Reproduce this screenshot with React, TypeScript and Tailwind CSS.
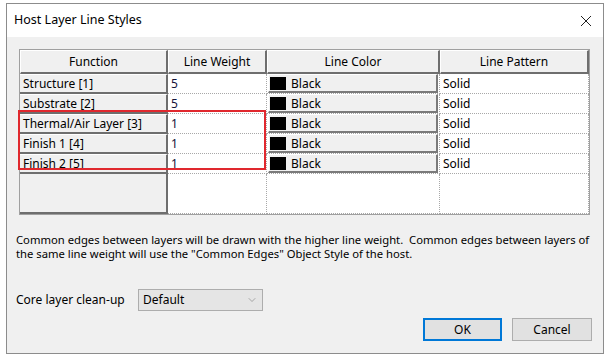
import { ChevronDown } from 'lucide-react';

const rows = [
  { fn: 'Structure [1]', weight: '5' },
  { fn: 'Substrate [2]', weight: '5' },
  { fn: 'Thermal/Air Layer [3]', weight: '1' },
  { fn: 'Finish 1 [4]', weight: '1' },
  { fn: 'Finish 2 [5]', weight: '1' },
];

function HeaderCell({ label, w }: { label: string; w: string }) {
  return (
    <div
      className={`${w} h-full flex items-center justify-center bg-[#f0f0f0] border-t border-l border-t-white border-l-white border-r-2 border-b-2 border-r-[#6e6e6e] border-b-[#6e6e6e]`}
    >
      {label}
    </div>
  );
}

export default function App() {
  return (
    <div
      className="w-[609px] h-[361px] bg-white pl-[6px] pt-[3px] text-[12px] text-black"
      style={{ fontFamily: '"Noto Sans", "Open Sans", sans-serif' }}
    >
      <div className="w-[598px] h-[351px] border border-[#8c8c8c] flex flex-col bg-[#f0f0f0]">
        {/* title bar */}
        <div className="h-[33px] bg-white flex items-center justify-between pl-[7px] pr-[11px] shrink-0">
          <span className="text-[12.5px]">Host Layer Line Styles</span>
          <svg width="12" height="12" viewBox="0 0 12 12">
            <path d="M1 1L11 11M11 1L1 11" stroke="#222" strokeWidth="1" />
          </svg>
        </div>

        <div className="flex-1 flex flex-col pl-[12px] pt-[12px]">
          {/* table */}
          <div className="relative w-[571px] h-[166px] border border-[#a0a0a0] bg-white flex flex-col">
            <div className="h-[24px] flex shrink-0">
              <HeaderCell label="Function" w="w-[148px]" />
              <HeaderCell label="Line Weight" w="w-[99px]" />
              <HeaderCell label="Line Color" w="w-[173px]" />
              <HeaderCell label="Line Pattern" w="w-[149px]" />
            </div>
            {rows.map((r, i) => (
              <div key={i} className="h-[20px] flex shrink-0">
                <div className="w-[148px] h-full flex items-center pl-[3px] bg-[#f0f0f0] border-t border-t-white border-r-2 border-b-2 border-r-[#6e6e6e] border-b-[#6e6e6e] leading-none">
                  {r.fn}
                </div>
                <div className="w-[99px] h-full flex items-center pl-[3px] border-b border-r border-dotted border-[#a8a8a8] text-[#14143a] leading-none">
                  {r.weight}
                </div>
                <div className="w-[173px] h-full border-b border-r border-dotted border-[#a8a8a8] pl-[1px] pr-[1px]">
                  <div className="h-full flex items-center gap-[5px] bg-[#f0f0f0] border-t border-l border-t-white border-l-white border-r-2 border-b-2 border-r-[#7a7a7a] border-b-[#7a7a7a] pl-[1px] leading-none">
                    <span className="w-[16px] h-[13px] bg-black inline-block" />
                    <span className="pt-[2px]">Black</span>
                  </div>
                </div>
                <div className="w-[149px] h-full flex items-center pl-[3px] border-b border-r border-dotted border-[#a8a8a8] leading-none">
                  Solid
                </div>
              </div>
            ))}
            <div className="flex-1 flex">
              <div className="w-[148px] h-full bg-[#f0f0f0] border-r-2 border-b-2 border-r-[#6e6e6e] border-b-[#6e6e6e]" />
              <div className="w-[99px] h-full border-b border-r border-dotted border-[#a8a8a8]" />
              <div className="w-[173px] h-full border-b border-r border-dotted border-[#a8a8a8]" />
              <div className="w-[149px] h-full border-b border-r border-dotted border-[#a8a8a8]" />
            </div>
            {/* highlight */}
            <div className="absolute left-[-2px] top-[60px] w-[248px] h-[60px] border-2 border-[#e0282e] pointer-events-none" />
          </div>

          <p className="mt-[18px] -ml-[3px] leading-[14px] text-[11.25px] whitespace-nowrap">
            Common edges between layers will be drawn with the higher line weight.&nbsp; Common edges between layers of
            <br />
            the same line weight will use the "Common Edges" Object Style of the host.
          </p>

          <div className="mt-[28px] -ml-[3px] flex items-center">
            <span className="w-[122px]">Core layer clean-up</span>
            <div className="w-[125px] h-[22px] bg-[#e5e5e5] border border-[#adadad] flex items-center justify-between pl-[4px] pr-[4px]">
              <span>Default</span>
              <ChevronDown size={12} strokeWidth={1} color="#666" />
            </div>
          </div>

          <div className="mt-[7px] flex justify-end gap-[10px] pr-[11px]">
            <div className="w-[79px] h-[23px] bg-[#e1e1e1] border-2 border-[#0078d7] flex items-center justify-center">OK</div>
            <div className="w-[80px] h-[23px] bg-[#e1e1e1] border border-[#adadad] flex items-center justify-center">Cancel</div>
          </div>
        </div>
      </div>
    </div>
  );
}
